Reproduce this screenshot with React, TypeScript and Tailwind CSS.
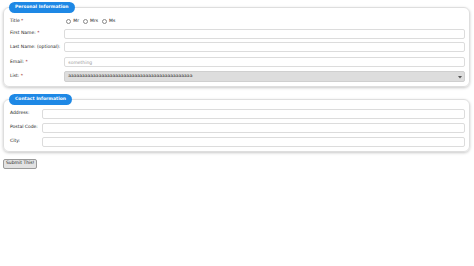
import React from "react";

const font = { fontFamily: '"DejaVu Sans", Verdana, sans-serif' };

function Req() {
  return <span className="text-[#a03030]"> *</span>;
}

function TextInput({ placeholder }: { placeholder?: string }) {
  return (
    <input
      type="text"
      placeholder={placeholder}
      className="h-[10px] w-full rounded-[2px] border border-[#dcdcdc] bg-white px-[3px] text-[4.5px] text-[#444] placeholder:text-[#9a9a9a] outline-none"
    />
  );
}

function Legend({ children }: { children: React.ReactNode }) {
  return (
    <legend className="ml-[-1px] rounded-full bg-[#1e88e5] px-[6px] py-0 h-[11px] flex items-center text-[4.5px] font-bold text-white leading-none">
      {children}
    </legend>
  );
}

export default function App() {
  const aa = "a".repeat(45);
  return (
    <div style={font} className="w-[474px] h-[266px] bg-white pl-[3px] pr-[4px] pt-[2px] text-[4.5px] text-[#222]">
      <fieldset className="rounded-[6px] border border-[#dedede] pl-[6px] pr-[4px] pb-[4px] pt-[4px] shadow-[0_1px_3px_rgba(0,0,0,0.22)]">
        <Legend>Personal Information</Legend>
        <div className="grid grid-cols-[auto_1fr] items-center gap-x-[4px] gap-y-[3.5px]">
          <label className="leading-none">Title<Req /></label>
          <div className="flex h-[8px] items-center gap-[4px] pl-[2px]">
            {["Mr", "Mrs", "Ms"].map((t) => (
              <label key={t} className="flex items-center gap-[2px] leading-none">
                <span className="inline-block h-[5px] w-[5px] rounded-full border border-[#888] bg-white" />
                <span>{t}</span>
              </label>
            ))}
          </div>
          <label className="leading-none">First Name:<Req /></label>
          <TextInput />
          <label className="leading-none">Last Name: (optional):</label>
          <TextInput />
          <label className="leading-none pt-[1px]">Email:<Req /></label>
          <div className="pt-[1.5px]"><TextInput placeholder="something" /></div>
          <label className="leading-none">List:<Req /></label>
          <div className="relative h-[11px] rounded-[2px] border border-[#cfcfcf] bg-[#dddddd] flex items-center pl-[3px] text-[4.5px] text-[#333] leading-none">
            <span>{aa}</span>
            <svg className="absolute right-[2px] top-[4px]" width="4" height="3" viewBox="0 0 4 3">
              <path d="M0 0 L4 0 L2 2.5 Z" fill="#555" />
            </svg>
          </div>
        </div>
      </fieldset>

      <fieldset className="mt-[7px] rounded-[6px] border border-[#dedede] pl-[6px] pr-[4px] pb-[4px] pt-[4px] shadow-[0_1px_3px_rgba(0,0,0,0.22)]">
        <Legend>Contact Information</Legend>
        <div className="grid grid-cols-[auto_1fr] items-center gap-x-[4px] gap-y-[4px]">
          <label className="leading-none">Address:</label>
          <TextInput />
          <label className="leading-none">Postal Code:</label>
          <TextInput />
          <label className="leading-none">City:</label>
          <TextInput />
        </div>
      </fieldset>

      <button className="mt-[7px] h-[10px] rounded-[2px] border border-[#9a9a9a] bg-[#e2e2e2] px-[2px] text-[4.5px] leading-none text-[#222]">
        Submit This!
      </button>
    </div>
  );
}
